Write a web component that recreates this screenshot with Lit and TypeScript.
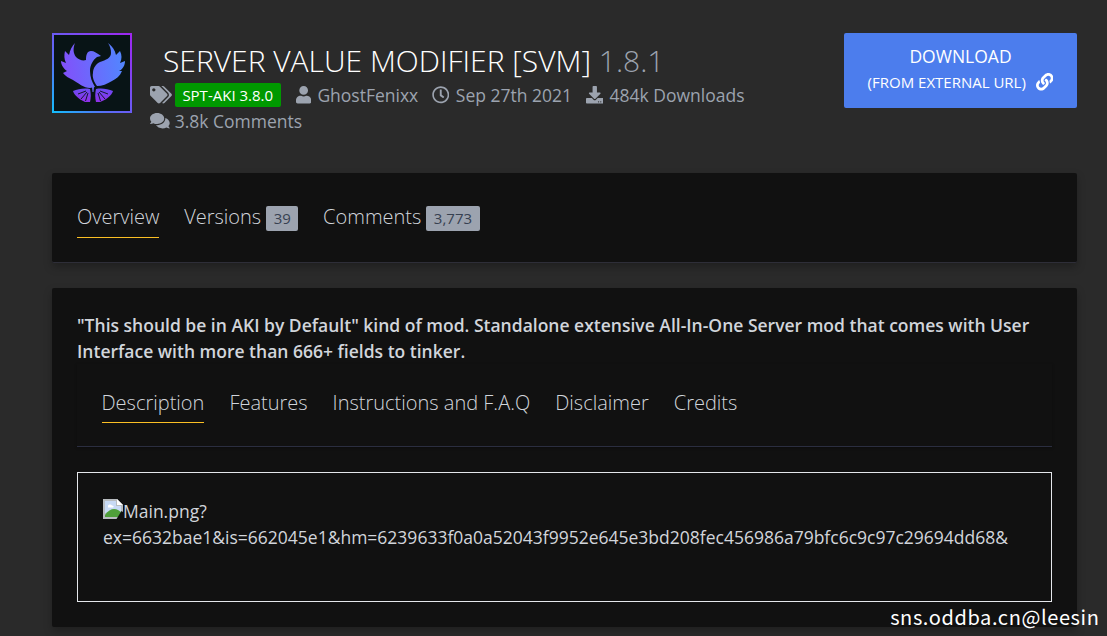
import { LitElement, html, css } from "lit";
import { customElement } from "lit/decorators.js";

const icon = (vb: string, d: string, cls = "ic") =>
  html`<svg class=${cls} viewBox=${vb} aria-hidden="true"><path fill="currentColor" d=${d}></path></svg>`;

const TAGS = "M497.941 225.941L286.059 14.059A48 48 0 0 0 252.118 0H48C21.49 0 0 21.49 0 48v204.118a48 48 0 0 0 14.059 33.941l211.882 211.882c18.744 18.745 49.136 18.746 67.882 0l204.118-204.118c18.745-18.745 18.745-49.137 0-67.882zM112 160c-26.51 0-48-21.49-48-48s21.49-48 48-48 48 21.49 48 48-21.49 48-48 48zm513.941 133.823L421.823 497.941c-18.745 18.745-49.137 18.745-67.882 0l-.36-.36L527.64 323.522c16.999-16.999 26.36-39.6 26.36-63.64s-9.362-46.641-26.36-63.64L331.397 0h48.721a48 48 0 0 1 33.941 14.059l211.882 211.882c18.745 18.745 18.745 49.137 0 67.882z";
const USER = "M224 256c70.7 0 128-57.3 128-128S294.7 0 224 0 96 57.3 96 128s57.3 128 128 128zm89.6 32h-16.7c-22.2 10.2-46.9 16-72.9 16s-50.6-5.8-72.9-16h-16.7C60.2 288 0 348.2 0 422.4V464c0 26.5 21.5 48 48 48h352c26.5 0 48-21.5 48-48v-41.6c0-74.2-60.2-134.4-134.4-134.4z";
const CLOCK = "M256 8C119 8 8 119 8 256s111 248 248 248 248-111 248-248S393 8 256 8zm0 448c-110.5 0-200-89.5-200-200S145.5 56 256 56s200 89.5 200 200-89.5 200-200 200zm61.8-104.4l-84.9-61.7c-3.1-2.3-4.9-5.9-4.9-9.7V116c0-6.6 5.4-12 12-12h32c6.6 0 12 5.4 12 12v141.7l66.8 48.6c5.4 3.9 6.5 11.4 2.6 16.8L334.6 349c-3.9 5.3-11.4 6.5-16.8 2.6z";
const DOWNLOAD = "M216 0h80c13.3 0 24 10.7 24 24v168h87.7c17.8 0 26.7 21.5 14.1 34.1L269.7 378.3c-7.5 7.5-19.8 7.5-27.3 0L90.1 226.1c-12.6-12.6-3.7-34.1 14.1-34.1H192V24c0-13.3 10.7-24 24-24zm296 376v112c0 13.3-10.7 24-24 24H24c-13.3 0-24-10.7-24-24V376c0-13.3 10.7-24 24-24h146.7l49 49c20.1 20.1 52.5 20.1 72.6 0l49-49H488c13.3 0 24 10.7 24 24zm-124 88c0-11-9-20-20-20s-20 9-20 20 9 20 20 20 20-9 20-20zm64 0c0-11-9-20-20-20s-20 9-20 20 9 20 20 20 20-9 20-20z";
const COMMENTS = "M416 192c0-88.4-93.1-160-208-160S0 103.6 0 192c0 34.3 14.1 65.9 38 92-13.4 30.2-35.5 54.2-35.8 54.5-2.2 2.3-2.8 5.7-1.5 8.7S4.8 352 8 352c36.6 0 66.9-12.3 88.7-25 32.2 15.7 70.3 25 111.3 25 114.9 0 208-71.6 208-160zm122 220c23.9-26 38-57.7 38-92 0-66.9-53.5-124.2-129.3-148.1.9 6.6 1.3 13.3 1.3 20.1 0 105.9-107.7 192-240 192-10.8 0-21.3-.8-31.7-1.9C207.8 439.6 281.8 480 368 480c41 0 79.1-9.2 111.3-25 21.8 12.7 52.1 25 88.7 25 3.2 0 6.1-1.9 7.3-4.8 1.3-2.9.7-6.3-1.5-8.7-.3-.3-22.4-24.2-35.8-54.5z";
const LINK = "M326.612 185.391c59.747 59.809 58.927 155.698.36 214.59-.11.12-.24.25-.36.37l-67.2 67.2c-59.27 59.27-155.699 59.262-214.96 0-59.27-59.26-59.27-155.7 0-214.96l37.106-37.106c9.84-9.84 26.786-3.3 27.294 10.606.648 17.722 3.826 35.527 9.69 52.721 1.986 5.822.567 12.262-3.783 16.612l-13.087 13.087c-28.026 28.026-28.905 73.66-1.155 101.96 28.024 28.579 74.086 28.749 102.325.51l67.2-67.19c28.191-28.191 28.073-73.757 0-101.83-3.701-3.694-7.429-6.564-10.341-8.569a16.037 16.037 0 0 1-6.947-12.606c-.396-10.567 3.348-21.456 11.698-29.806l21.054-21.055c5.521-5.521 14.182-6.199 20.584-1.731a152.482 152.482 0 0 1 20.522 17.197zM467.547 44.449c-59.261-59.262-155.69-59.27-214.96 0l-67.2 67.2c-.12.12-.25.25-.36.37-58.566 58.892-59.387 154.781.36 214.59a152.454 152.454 0 0 0 20.521 17.196c6.402 4.468 15.064 3.789 20.584-1.731l21.054-21.055c8.35-8.35 12.094-19.239 11.698-29.806a16.037 16.037 0 0 0-6.947-12.606c-2.912-2.005-6.64-4.875-10.341-8.569-28.073-28.073-28.191-73.639 0-101.83l67.2-67.19c28.239-28.239 74.3-28.069 102.325.51 27.75 28.3 26.872 73.934-1.155 101.96l-13.087 13.087c-4.35 4.35-5.769 10.79-3.783 16.612 5.864 17.194 9.042 34.999 9.69 52.721.509 13.906 17.454 20.446 27.294 10.606l37.106-37.106c59.271-59.259 59.271-155.699.001-214.959z";

const logo = html`<svg class="logo" viewBox="0 0 80 80" aria-hidden="true">
  <defs>
    <linearGradient id="frame" x1="0" y1="1" x2="1" y2="0">
      <stop offset="0" stop-color="#12c0fb"></stop>
      <stop offset=".35" stop-color="#5a6cf5"></stop>
      <stop offset="1" stop-color="#a024f0"></stop>
    </linearGradient>
    <linearGradient id="bird" gradientUnits="userSpaceOnUse" x1="9" y1="30" x2="73" y2="22">
      <stop offset="0" stop-color="#8250fa"></stop>
      <stop offset="1" stop-color="#5088ff"></stop>
    </linearGradient>
    <linearGradient id="tail" x1="0" y1="0" x2="0" y2="1">
      <stop offset="0" stop-color="#6a4df4"></stop>
      <stop offset="1" stop-color="#9030e8"></stop>
    </linearGradient>
  </defs>
  <rect x="0" y="0" width="80" height="80" fill="url(#frame)"></rect>
  <rect x="2" y="2" width="76" height="76" fill="#081416"></rect>
  <path fill="url(#bird)" d="M23 10C21 15 21 20 24 24C27 27 31 28 34 27C34 22 35 18 39 18C42 18 45 20 49 23L45 24C41 27 38 32 38 38C38 44 40 49 43 54L38 55C32 55 26 50 21 47C17 45 13 43 11 40L15 38C12 36 9 32 9 28L14 30C12 26 12 22 13 18L17 22C18 17 20 13 23 10Z"></path>
  <path fill="url(#bird)" d="M56 10C60 13 63 17 64 22L68 18C70 22 70 26 68 30L73 28C73 32 71 36 67 38L70 38C68 43 64 46 60 48C55 51 50 53 45 53C42 49 40 44 41 40C41 35 44 31 48 29C54 27 59 25 59 20C59 16 58 13 56 10Z"></path>
  <path fill="url(#tail)" d="M38 56C32 55 26 56 21 58C22 62 28 67 33 69C35 69 37 69 38 69C39 65 39 60 38 56Z"></path>
  <path fill="url(#tail)" d="M44 56C50 55 56 56 61 58C60 62 54 67 48 69C46 69 45 69 44 69C43 65 43 60 44 56Z"></path>
  <path stroke="#081416" stroke-width="0.9" fill="none" d="M34 58L26 61M35 59L29 66M36 60L33.5 68M48 58L56 61M47 59L53 66M46 60L48.5 68"></path>
  <path fill="#6a6af8" d="M40 54L42 54L41.5 59L40.5 59Z"></path>
</svg>`;

const brokenImg = html`<svg class="broken" viewBox="0 0 20 20" aria-hidden="true">
  <path fill="#b8bcc0" d="M0 0H14L20 6V20H0Z"></path>
  <path fill="#fff" d="M14 0L20 6H14Z"></path>
  <path fill="#c8daf5" d="M2 2H13V7H18V14H2Z"></path>
  <path fill="#fff" d="M5 7C5 5.5 8 5 9 6.5C11 6.5 11 8 10 8.5H5Z"></path>
  <path fill="#4f9f3a" d="M2 18V16C6 10 11 9 15 11L18 13V18Z"></path>
  <path fill="#111" d="M13.5 20L18.5 12L20 13V20Z"></path>
</svg>`;

@customElement("app-root")
export class AppRoot extends LitElement {
  static styles = css`
    :host {
      display: block;
      height: 636px;
      overflow: hidden;
      position: relative;
      background: #2a2a2a;
      font-family: "Open Sans", sans-serif;
    }
    .page {
      display: flex;
      flex-direction: column;
      padding: 33px 30px 0 52px;
    }
    .head {
      display: flex;
      height: 114px;
      margin-bottom: 26px;
    }
    .logo {
      width: 80px;
      height: 80px;
      flex: none;
      margin-right: 18px;
    }
    .info {
      flex: 1;
      min-width: 0;
    }
    .title {
      margin: 8px 0 0 13px;
      font-size: 30px;
      line-height: 40px;
      font-weight: 300;
      color: #fff;
    }
    .title span {
      color: #9ca3af;
    }
    .meta {
      width: 620px;
      margin-top: 1px;
      display: flex;
      flex-wrap: wrap;
      align-items: center;
      font-size: 17.5px;
      line-height: 26px;
      color: #9ca3af;
    }
    .item {
      display: flex;
      align-items: center;
      margin-right: 13.5px;
    }
    .item.first {
      margin-right: 15px;
    }
    .ic {
      height: 17.5px;
      width: auto;
      flex: none;
      margin-right: 6.5px;
      color: #9ca3af;
    }
    .ic.tagic {
      margin-right: 3px;
    }
    .ic.bubbles {
      margin-right: 5px;
    }
    .pill {
      background: #009900;
      color: #fff;
      font-size: 15px;
      line-height: 24px;
      padding: 0 7.5px;
      border-radius: 2px;
    }
    .btn {
      width: 233px;
      height: 75px;
      box-sizing: border-box;
      padding-bottom: 3px;
      flex: none;
      background: #4c7ded;
      border-radius: 2px;
      color: #fff;
      display: flex;
      flex-direction: column;
      align-items: center;
      justify-content: center;
    }
    .btn .a {
      font-size: 17.5px;
      line-height: 26px;
    }
    .btn .b {
      font-size: 15px;
      line-height: 26px;
      display: flex;
      align-items: center;
    }
    .btn .ic {
      color: #fff;
      margin: 0 0 0 10px;
    }
    .card {
      background: #111;
      border-radius: 2px;
      box-shadow: 0 4px 8px rgba(0, 0, 0, 0.25);
      padding: 0 25px;
    }
    .top {
      height: 90px;
      box-sizing: border-box;
      border-bottom: 1px solid #2e2e38;
      margin-bottom: 25px;
      display: flex;
      align-items: flex-start;
    }
    .tabs {
      display: flex;
      gap: 25px;
      font-weight: 300;
      font-size: 20px;
      line-height: 28px;
      color: #d1d5db;
    }
    .top .tabs {
      padding-top: 30px;
      gap: 24.75px;
    }
    .tab {
      display: flex;
      align-items: flex-start;
      height: 34px;
      white-space: nowrap;
    }
    .inner .tab {
      height: 33px;
    }
    .tab.on {
      border-bottom: 1px solid #fbbf24;
    }
    .badge {
      background: #9ca3af;
      color: #374151;
      font-weight: 400;
      font-size: 15px;
      line-height: 25px;
      padding: 0 7.5px;
      border-radius: 2px;
      margin: 3px 0 0 5px;
    }
    .main {
      height: 339px;
      padding-top: 24px;
      box-sizing: border-box;
    }
    .lead {
      margin: 0;
      font-size: 17.5px;
      line-height: 26px;
      font-weight: 600;
      color: #d1d5db;
    }
    .inner {
      height: 83px;
      border-bottom: 1px solid #2b2e40;
      padding-left: 24.5px;
      box-sizing: border-box;
      margin-bottom: 25px;
      box-shadow: 0 1px 3px rgba(0, 0, 0, 0.3);
    }
    .inner .tabs {
      padding-top: 25px;
    }
    .box {
      border: 1px solid #e5e7eb;
      height: 130px;
      box-sizing: border-box;
      padding: 25px;
      font-size: 17.5px;
      line-height: 26px;
      color: #d1d5db;
      word-break: break-all;
    }
    .broken {
      width: 20px;
      height: 20px;
      vertical-align: -1px;
    }
    .mark {
      position: absolute;
      right: 7.5px;
      bottom: 6px;
      color: #fff;
      font-family: "Noto Sans CJK SC", "Noto Sans", sans-serif;
      font-size: 20px;
      line-height: 26px;
      letter-spacing: 0.6px;
    }
  `;

  render() {
    return html`
      <div class="page">
        <div class="head">
          ${logo}
          <div class="info">
            <div class="title">SERVER VALUE MODIFIER [SVM] <span>1.8.1</span></div>
            <div class="meta">
              <div class="item first">
                ${icon("0 0 640 512", TAGS, "ic tagic")}
                <span class="pill">SPT-AKI 3.8.0</span>
              </div>
              <div class="item">${icon("0 0 448 512", USER)}<span>GhostFenixx</span></div>
              <div class="item">${icon("0 0 512 512", CLOCK)}<span>Sep 27th 2021</span></div>
              <div class="item">${icon("0 0 512 512", DOWNLOAD)}<span>484k Downloads</span></div>
              <div class="item">${icon("0 0 576 512", COMMENTS, "ic bubbles")}<span>3.8k Comments</span></div>
            </div>
          </div>
          <div class="btn">
            <div class="a">DOWNLOAD</div>
            <div class="b">(FROM EXTERNAL URL) ${icon("0 0 512 512", LINK)}</div>
          </div>
        </div>
        <div class="card top">
          <div class="tabs">
            <div class="tab on">Overview</div>
            <div class="tab">Versions<span class="badge">39</span></div>
            <div class="tab">Comments<span class="badge">3,773</span></div>
          </div>
        </div>
        <div class="card main">
          <p class="lead">"This should be in AKI by Default" kind of mod. Standalone extensive All-In-One Server mod that comes with User Interface with more than 666+ fields to tinker.</p>
          <div class="inner">
            <div class="tabs">
              <div class="tab on">Description</div>
              <div class="tab">Features</div>
              <div class="tab">Instructions and F.A.Q</div>
              <div class="tab">Disclaimer</div>
              <div class="tab">Credits</div>
            </div>
          </div>
          <div class="box">${brokenImg}Main.png?<br />ex=6632bae1&amp;is=662045e1&amp;hm=6239633f0a0a52043f9952e645e3bd208fec456986a79bfc6c9c97c29694dd68&amp;</div>
        </div>
      </div>
      <div class="mark">sns.oddba.cn@leesin</div>
    `;
  }
}
